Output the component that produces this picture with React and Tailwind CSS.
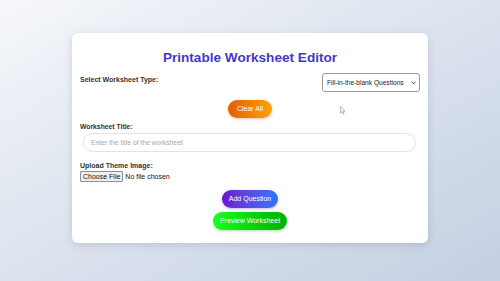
import React, { useState } from 'react';

export default function App() {
  const [type, setType] = useState('fill');
  const [title, setTitle] = useState('');

  return (
    <div className="relative w-[500px] h-[281px] overflow-hidden bg-gradient-to-br from-[#f5f7fa] to-[#c3cfe2] pt-[33px] font-['Liberation_Sans',Arial,sans-serif]">
      {/* Editor card */}
      <div className="mx-auto w-[356px] rounded-[6px] bg-white px-2 pt-[16px] pb-[13px] shadow-[0_2px_8px_rgba(0,0,0,0.12)]">
        <h1 className="text-center text-[13.6px] leading-[17px] font-bold text-[#4338ca]">
          Printable Worksheet Editor
        </h1>

        <div className="mt-[7px] flex items-start justify-between">
          <label className="mt-[2px] text-[7px] leading-[9px] font-bold text-[#333]">
            Select Worksheet Type:
          </label>
          <div className="relative">
            <select
              value={type}
              onChange={(e) => setType(e.target.value)}
              className="block h-[19px] w-[98px] appearance-none rounded-[3px] border border-[#9a9a9a] bg-white pl-[4px] text-[6.6px] text-[#222] outline-none"
            >
              <option value="fill">Fill-in-the-blank Questions</option>
              <option value="mc">Multiple Choice Questions</option>
            </select>
            <svg className="pointer-events-none absolute right-[4px] top-[8px]" width="5" height="4" viewBox="0 0 5 4">
              <path d="M0.6 0.8 L2.5 2.8 L4.4 0.8" fill="none" stroke="#333" strokeWidth="0.9" />
            </svg>
          </div>
        </div>

        <div className="mt-[8px] flex justify-center">
          <button className="h-[18px] rounded-full bg-gradient-to-r from-[#e65c00] to-[#f7a20a] px-[9px] text-[7px] text-white shadow-[0_1px_3px_rgba(230,92,0,0.35)]">
            Clear All
          </button>
        </div>

        <label className="mt-[4px] block text-[6.8px] leading-[9px] font-bold text-[#333]">
          Worksheet Title:
        </label>
        <input
          value={title}
          onChange={(e) => setTitle(e.target.value)}
          placeholder="Enter the title of the worksheet"
          className="mx-[3px] mt-[2px] block h-[19px] w-[333px] rounded-full border border-[#e3e3e3] px-[7px] text-[6.8px] text-[#333] placeholder:text-[#a8a8a8] outline-none"
        />

        <label className="mt-[9px] block text-[7px] leading-[9px] font-bold text-[#333]">
          Upload Theme Image:
        </label>
        <div className="mt-[1px] flex items-center text-[7px] leading-[9px] text-[#111]">
          <span className="rounded-[1px] border border-[#8f8f8f] bg-[#efefef] px-[2px]">Choose File</span>
          <span className="ml-[2px]">No file chosen</span>
        </div>

        <div className="mt-[8px] flex flex-col items-center gap-[4px]">
          <button className="h-[18px] rounded-full bg-gradient-to-r from-[#6a11cb] to-[#2575fc] px-[7px] text-[7px] text-white shadow-[0_1px_3px_rgba(80,40,200,0.35)]">
            Add Question
          </button>
          <button className="h-[18px] rounded-full bg-gradient-to-r from-[#1aff1a] to-[#00b000] px-[7px] text-[7px] text-white shadow-[0_1px_3px_rgba(0,160,0,0.35)]">
            Preview Worksheet
          </button>
        </div>
      </div>

      {/* mouse pointer */}
      <svg className="absolute left-[340px] top-[106px]" width="6" height="9" viewBox="0 0 6 9">
        <path d="M0.5 0.5 L0.5 7 L2 5.6 L3.2 8.2 L4.1 7.8 L3 5.3 L5 5.3 Z" fill="#fff" stroke="#9a9a9a" strokeWidth="0.7" />
      </svg>
    </div>
  );
}
